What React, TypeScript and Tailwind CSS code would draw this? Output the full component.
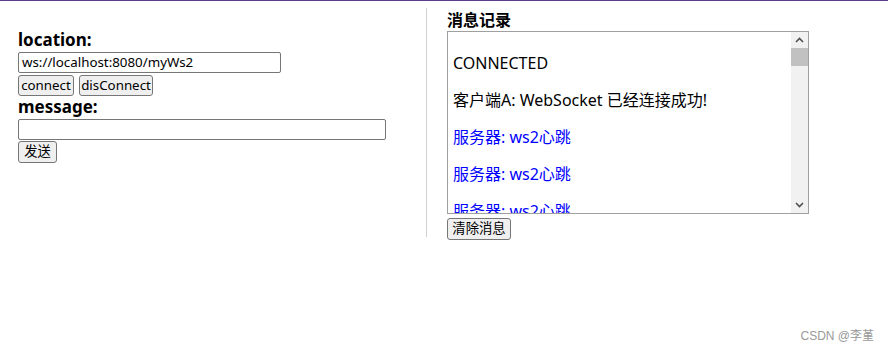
import React from "react";

const font = { fontFamily: '"Noto Sans", "Noto Sans CJK SC", sans-serif' };

function Btn({ children, w }: { children: React.ReactNode; w: string }) {
  return (
    <button
      className={`h-[21px] ${w} border border-[#767676] rounded-[3px] bg-[#efefef] text-[13.33px] leading-none text-black flex items-center justify-center px-0`}
    >
      {children}
    </button>
  );
}

export default function App() {
  const msgs: { t: string; blue?: boolean }[] = [
    { t: "CONNECTED" },
    { t: "客户端A: WebSocket 已经连接成功!" },
    { t: "服务器: ws2心跳", blue: true },
    { t: "服务器: ws2心跳", blue: true },
    { t: "服务器: ws2心跳", blue: true },
  ];
  return (
    <div className="w-[888px] h-[351px] bg-white relative overflow-hidden text-black" style={font}>
      <div className="h-[1px] bg-[#5b3e8c]" />
      <div className="flex pt-[7px]">
        <div className="w-[427px] h-[229px] border-r border-[#d0d0d0] pl-[18px] pt-[21px] flex flex-col">
          <div className="text-[17px] font-bold leading-[22px] h-[23px]">location:</div>
          <div className="w-[263px] h-[21px] border border-[#767676] rounded-[2px] flex items-center pl-[3px] text-[13.33px]">
            ws://localhost:8080/myWs2
          </div>
          <div className="flex gap-[5px] mt-[2px]">
            <Btn w="w-[56px]">connect</Btn>
            <Btn w="w-[74px]">disConnect</Btn>
          </div>
          <div className="text-[17px] font-bold leading-[22px] h-[23px]">message:</div>
          <div className="w-[368px] h-[21px] border border-[#767676] rounded-[2px]" />
          <div className="mt-[1px]">
            <Btn w="w-[39px] h-[22px]">发送</Btn>
          </div>
        </div>
        <div className="pl-[20px] flex flex-col">
          <div className="text-[16px] font-bold leading-[22px] h-[22px] mt-[1px]">消息记录</div>
          <div className="w-[362px] h-[183px] border border-[#a0a0a0] flex">
            <div className="flex-1 overflow-hidden pl-[5px] pt-[5px]">
              {msgs.map((m, i) => (
                <p
                  key={i}
                  className={`text-[16px] leading-[21px] my-[16px] whitespace-nowrap ${m.blue ? "text-[#0000ff]" : "text-black"}`}
                >
                  {m.t}
                </p>
              ))}
            </div>
            <div className="w-[17px] bg-[#f1f1f1] flex flex-col">
              <div className="h-[16px] flex items-center justify-center">
                <svg width="9" height="6" viewBox="0 0 9 6">
                  <path d="M1 5 L4.5 1.5 L8 5" fill="none" stroke="#505050" strokeWidth="1.6" />
                </svg>
              </div>
              <div className="h-[18px] bg-[#c1c1c1]" />
              <div className="flex-1" />
              <div className="h-[16px] flex items-center justify-center">
                <svg width="9" height="6" viewBox="0 0 9 6">
                  <path d="M1 1 L4.5 4.5 L8 1" fill="none" stroke="#505050" strokeWidth="1.6" />
                </svg>
              </div>
            </div>
          </div>
          <div className="mt-[4px]">
            <Btn w="w-[64px] h-[22px]">清除消息</Btn>
          </div>
        </div>
      </div>
      <div
        className="absolute right-[14px] bottom-[9px] text-[12px] text-[#999999] leading-none"
        style={{ fontFamily: '"Liberation Sans", "Noto Sans CJK SC", sans-serif' }}
      >
        CSDN @李堇
      </div>
    </div>
  );
}
